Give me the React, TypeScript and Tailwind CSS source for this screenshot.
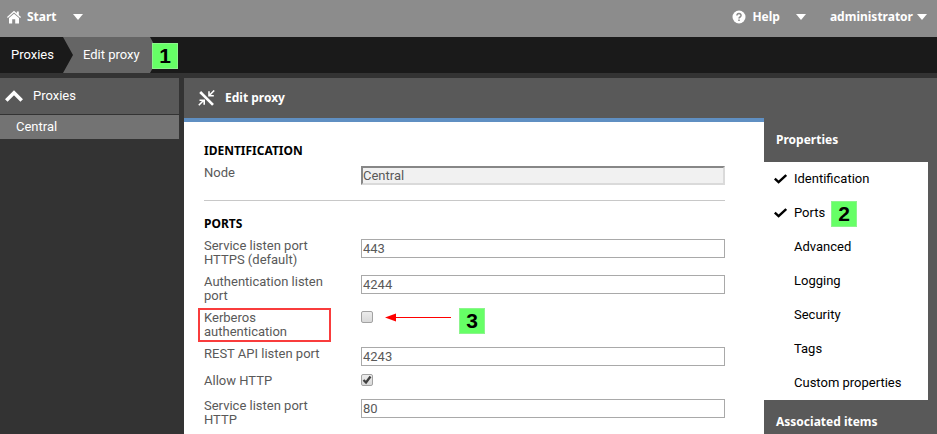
import { useState } from "react";
import type { ReactNode } from "react";

function Caret() {
  return (
    <svg width="10" height="6" viewBox="0 0 10 6" aria-hidden="true">
      <path d="M0 0h10L5 6z" fill="#fff" />
    </svg>
  );
}

function HomeIcon() {
  return (
    <svg width="14" height="14" viewBox="0 0 14 14" fill="#fff" aria-hidden="true">
      <path d="M7 .8 0 7l.8 1L7 2.600 13.200 8l.8-1-2.200-2V1.500H9.800v1.700z" />
      <path d="M7 3.800 2 8v5.500h3.200V9.200h3v4.300H12V8z" />
    </svg>
  );
}

function HelpIcon() {
  return (
    <svg width="14" height="14" viewBox="0 0 14 14" aria-hidden="true">
      <circle cx="7" cy="7" r="6.500" fill="#fff" />
      <path d="M4.900 5.400a2.100 1.900 0 1 1 3.200 1.600c-.8.5-1.100.8-1.100 1.500" fill="none" stroke="#8c8c8c" strokeWidth="1.500" />
      <path d="M6.200 9.500h1.600v1.500H6.200z" fill="#8c8c8c" />
    </svg>
  );
}

function CollapseIcon() {
  return (
    <svg width="17" height="16" viewBox="0 0 17 16" fill="none" stroke="#fff" aria-hidden="true">
      <path d="M2.200 2 15 14.800" strokeWidth="2.600" />
      <path d="M16.200.5 11.500 5.200M11 1.200v4.500h4.800" strokeWidth="1.600" />
      <path d="M.8 15.200l4.900-4.900M1.500 10.200h4.700v4.500" strokeWidth="1.600" />
    </svg>
  );
}

function Tick() {
  return (
    <svg width="13" height="10" viewBox="0 0 13 10" fill="none" stroke="#000" strokeWidth="2.400" aria-hidden="true">
      <path d="M.8 4.600 4.600 8.200 12.200 1" />
    </svg>
  );
}

function Badge({ place, children }: { place: string; children: ReactNode }) {
  return (
    <span
      className={`absolute z-10 flex size-[26px] items-center justify-center border border-[#8cf58c] bg-[#66ff66] font-['Liberation_Sans',Arial,sans-serif] text-[21px] leading-6 font-bold text-black ${place}`}
    >
      {children}
    </span>
  );
}

function Row({ id, label, marked, children }: { id: string; label: string; marked?: boolean; children: ReactNode }) {
  return (
    <div className="relative flex items-start">
      {marked && <span className="absolute -top-0.5 -left-1.5 h-[34px] w-[133px] border-2 border-[#f93c3c]" />}
      <div className="w-[157px] shrink-0 pt-px pr-6">
        <label htmlFor={id} className="block text-[13px] leading-[14px] text-[#595959]">
          {label}
        </label>
      </div>
      <div className="relative flex min-h-[18px] flex-1 items-start pt-px">{children}</div>
    </div>
  );
}

function TextRow({ id, label, value, disabled }: { id: string; label: string; value: string; disabled?: boolean }) {
  return (
    <Row id={id} label={label}>
      <input
        id={id}
        type="text"
        defaultValue={value}
        disabled={disabled}
        className={`h-[19px] w-full min-w-0 text-[13px] leading-4 text-[#595959] ${
          disabled
            ? "border-2 border-t-[#878787] border-r-[#dadada] border-b-[#dadada] border-l-[#878787] bg-[#f1f1f1]"
            : "border border-[#a9a9a9] bg-white px-px"
        }`}
      />
    </Row>
  );
}

function CheckRow({ id, label, checked, marked, children }: { id: string; label: string; checked: boolean; marked?: boolean; children?: ReactNode }) {
  const [on, setOn] = useState(checked);
  return (
    <Row id={id} label={label} marked={marked}>
      <span className="relative size-3">
        <input
          id={id}
          type="checkbox"
          checked={on}
          onChange={(e) => setOn(e.target.checked)}
          className="block size-3 appearance-none rounded-xs border border-[#a2a2a2] bg-linear-to-b from-[#ececec] to-[#d9d9d9]"
        />
        {on && (
          <svg className="pointer-events-none absolute inset-0" width="12" height="12" viewBox="0 0 12 12" fill="none" stroke="#404040" strokeWidth="2.300" aria-hidden="true">
            <path d="M2.500 6 5 8.500 9.500 2.500" />
          </svg>
        )}
      </span>
      {children}
    </Row>
  );
}

const properties = ["Identification", "Ports", "Advanced", "Logging", "Security", "Tags", "Custom properties"];

const heading = "font-['Noto_Sans',sans-serif] text-[12px] leading-4 font-bold";

export default function App() {
  return (
    <div className="flex min-h-screen flex-col bg-[#333] font-[Roboto,sans-serif] text-[13px] leading-4 text-white">
      <header className={`flex h-[37px] items-center justify-between bg-[#8c8c8c] pr-2.5 pb-1 pl-[7px] ${heading}`}>
        <button className="flex items-center gap-1.5">
          <HomeIcon />
          <span className="mr-2.5">Start</span>
          <Caret />
        </button>
        <div className="flex items-center gap-6">
          <button className="flex items-center gap-1.5">
            <HelpIcon />
            <span className="mr-2.5">Help</span>
            <Caret />
          </button>
          <button className="flex items-center gap-1">
            administrator
            <Caret />
          </button>
        </div>
      </header>

      <nav className="relative flex h-9 items-stretch bg-[#1a1a1a]">
        <a href="#proxies" className="flex w-[63px] items-center pl-[11px]">Proxies</a>
        <a
          href="#edit"
          className="flex w-[97px] items-center bg-[#656565] pl-5 whitespace-nowrap [clip-path:polygon(0_0,87px_0,100%_50%,87px_100%,0_100%,10px_50%)]"
        >
          Edit proxy
        </a>
        <Badge place="left-[152px] top-1.5">1</Badge>
      </nav>

      <div className="flex flex-1 pt-[5px]">
        <aside className="mr-[5px] w-[179px] shrink-0">
          <button className="flex h-9 w-full items-center gap-2.5 bg-[#595959] pl-[5px]">
            <svg width="18" height="12" viewBox="0 0 18 12" fill="none" stroke="#fff" strokeWidth="3.600" aria-hidden="true">
              <path d="M1.300 10.500 9 2.700l7.700 7.800" />
            </svg>
            Proxies
          </button>
          <a href="#central" className="mt-px flex h-6 items-center bg-[#737373] pl-4">Central</a>
        </aside>

        <div className="flex flex-1 flex-col bg-[#595959]">
          <div className="flex h-10 items-center gap-2.5 pl-3.5">
            <CollapseIcon />
            <h1 className={heading}>Edit proxy</h1>
          </div>
          <div className="flex flex-1">
            <main className="flex-1 border-t-4 border-[#5f8fc2] bg-white pt-[21px] pr-[39px] pl-5">
              <section className="border-b border-[#c8c8c8] pb-[15px]">
                <h2 className={`mb-1.5 text-black ${heading}`}>IDENTIFICATION</h2>
                <TextRow id="node" label="Node" value="Central" disabled />
              </section>
              <section className="pt-[15px]">
                <h2 className={`mb-1.5 text-black ${heading}`}>PORTS</h2>
                <div className="flex flex-col gap-[7px]">
                  <TextRow id="https" label="Service listen port HTTPS (default)" value="443" />
                  <TextRow id="auth" label="Authentication listen port" value="4244" />
                  <CheckRow id="kerberos" label="Kerberos authentication" checked={false} marked>
                    <svg className="absolute top-0.5 left-6" width="66" height="10" viewBox="0 0 66 10" aria-hidden="true">
                      <path d="M10 5.500h56" stroke="#f00" />
                      <path d="M0 5.500 11 1.500v8z" fill="#f00" />
                    </svg>
                    <Badge place="left-[98px] -top-0.5">3</Badge>
                  </CheckRow>
                  <TextRow id="rest" label="REST API listen port" value="4243" />
                  <CheckRow id="http" label="Allow HTTP" checked />
                  <TextRow id="http-port" label="Service listen port HTTP" value="80" />
                </div>
              </section>
            </main>

            <aside className="w-[173px] shrink-0 pr-[9px]">
              <h2 className={`flex h-11 items-center pl-3 ${heading}`}>Properties</h2>
              <ul className="bg-white text-black">
                {properties.map((name, i) => (
                  <li key={name} className="relative h-[34px]">
                    <button className="flex h-full w-full items-center gap-[7px] pl-2.5">
                      <span className="w-[13px]">{i < 2 && <Tick />}</span>
                      {name}
                    </button>
                    {name === "Ports" && <Badge place="left-[67px] top-[5px]">2</Badge>}
                  </li>
                ))}
              </ul>
              <h2 className={`flex h-11 items-center pl-3 ${heading}`}>Associated items</h2>
            </aside>
          </div>
        </div>
      </div>
    </div>
  );
}
